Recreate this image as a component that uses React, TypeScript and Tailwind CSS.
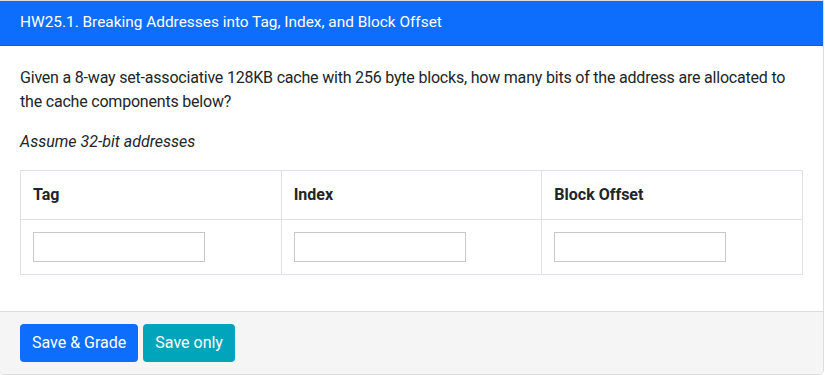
export default function App() {
  const cols = ['Tag', 'Index', 'Block Offset'];

  return (
    <div className="w-[825px] h-[375px] bg-white overflow-hidden" style={{ fontFamily: 'Roboto, "Noto Sans", sans-serif' }}>
      <div className="-ml-px w-[825px] border border-[#dcdcdc] rounded-b-[5px] overflow-hidden text-[#212529]">
        {/* header */}
        <div className="bg-[#0d6efd] text-white text-[15.4px] leading-[21px] px-5 pt-[12px] pb-[12px] border-b border-[#0b5fd9] -mt-px">
          HW25.1. Breaking Addresses into Tag, Index, and Block Offset
        </div>

        {/* body */}
        <div className="px-5 pt-5 pb-5 text-[16px] leading-6">
          <p className="mb-4 tracking-[-0.2px]">
            <span className="whitespace-nowrap">
              Given a 8-way set-associative 128KB cache with 256 byte blocks, how many bits of the address are allocated to
            </span>
            <br />
            the cache components below?
          </p>
          <p className="mb-4 italic">Assume 32-bit addresses</p>

          <table className="w-full border-collapse mb-4">
            <thead>
              <tr>
                {cols.map((c) => (
                  <th key={c} className="w-1/3 border border-[#dee2e6] p-3 text-left font-bold">
                    {c}
                  </th>
                ))}
              </tr>
            </thead>
            <tbody>
              <tr>
                {cols.map((c) => (
                  <td key={c} className="border border-[#dee2e6] px-3 py-3">
                    <input type="text" className="block w-[172px] h-[30px] border border-[#c8c8c8] bg-white outline-none" />
                  </td>
                ))}
              </tr>
            </tbody>
          </table>
        </div>

        {/* footer */}
        <div className="bg-[#f5f5f5] border-t border-[#dcdcdc] px-5 py-3 flex gap-[5px]">
          <button className="bg-[#0d6efd] text-white text-[16px] leading-6 px-3 py-[7px] rounded">Save &amp; Grade</button>
          <button className="bg-[#00a5bb] text-white text-[16px] leading-6 px-3 py-[7px] rounded">Save only</button>
        </div>
      </div>
    </div>
  );
}
